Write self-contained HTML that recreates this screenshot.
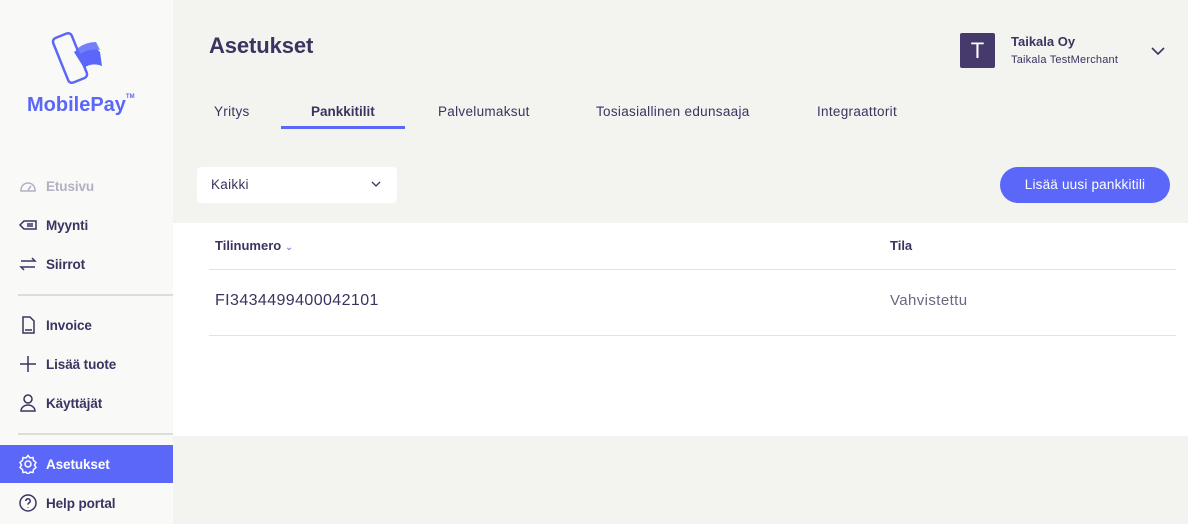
<!DOCTYPE html>
<html><head><meta charset="utf-8"><style>
*{box-sizing:border-box;margin:0;padding:0}
body{width:1188px;height:524px;overflow:hidden;background:#f3f3ef;font-family:"Liberation Sans",sans-serif;color:#3b3360;position:relative}
.side{position:absolute;left:0;top:0;width:173px;height:524px;background:#f9f9f8}
.nav{position:absolute;left:0;width:173px;height:38px;display:flex;align-items:center;padding-left:18px;font-size:13.5px;font-weight:bold;letter-spacing:-0.1px}
.nav svg{width:20px;height:20px;margin-right:8px;fill:none;stroke:#3b3360;stroke-width:1.5}
.hr{position:absolute;left:18px;width:155px;height:2px;background:#dcdcd8}
.abs{position:absolute}
.tab{position:absolute;top:104px;font-size:13.5px;letter-spacing:0.3px}
</style></head><body>
<div class="side">
  <svg class="abs" style="left:50px;top:28px" width="60" height="62" viewBox="0 0 60 62">
    <rect x="10" y="6" width="20" height="48" rx="4" transform="rotate(-22 20 30)" fill="none" stroke="#5a67f8" stroke-width="2.5"/>
    <path d="M24 24 Q32 18 44 18 L50 24 L52 38 Q42 34 34 40 Z" fill="#5a67f8"/>
    <path d="M28 20 Q36 14 46 14 L50 22 Q40 20 30 26 Z" fill="#7480fa"/>
  </svg>
  <div class="abs" style="left:27px;top:94px;font-size:20px;font-weight:bold;color:#5a67f8;letter-spacing:0px">MobilePay<span style="font-size:6px;vertical-align:top">TM</span></div>
  <div class="nav" style="top:167px;color:#b3b0c2"><svg viewBox="0 0 20 20" style="stroke:#b3b0c2"><path d="M3 14a7 7 0 1 1 14 0v1H3z M10 14l3-4"/></svg>Etusivu</div>
  <div class="nav" style="top:206px"><svg viewBox="0 0 20 20"><path d="M6 6h12v8H6L2 10z M9 9h6 M9 11h6"/></svg>Myynti</div>
  <div class="nav" style="top:245px"><svg viewBox="0 0 20 20"><path d="M3 7h14l-3-3 M17 13H3l3 3"/></svg>Siirrot</div>
  <div class="hr" style="top:294px"></div>
  <div class="nav" style="top:306px"><svg viewBox="0 0 20 20"><path d="M5 2h7l4 4v12H5z M7 15h7" /></svg>Invoice</div>
  <div class="nav" style="top:345px"><svg viewBox="0 0 20 20"><path d="M10 2v16 M2 10h16"/></svg>Lisää tuote</div>
  <div class="nav" style="top:384px"><svg viewBox="0 0 20 20"><circle cx="10" cy="6" r="4"/><path d="M3 18a7 6 0 0 1 14 0z"/></svg>Käyttäjät</div>
  <div class="hr" style="top:433px"></div>
  <div class="nav" style="top:445px;background:#5a67f8;color:#fff"><svg viewBox="0 0 20 20" style="stroke:#fff"><circle cx="10" cy="10" r="3"/><path d="M10 1.5l2 2.5 3-.5.5 3 2.5 2-1.5 2.5 1.5 2.5-2.5 2-.5 3-3-.5-2 2.5-2-2.5-3 .5-.5-3-2.5-2 1.5-2.5-1.5-2.5 2.5-2 .5-3 3 .5z"/></svg>Asetukset</div>
  <div class="nav" style="top:484px"><svg viewBox="0 0 20 20"><circle cx="10" cy="10" r="8"/><path d="M7.8 8a2.2 2.2 0 1 1 3 2c-.7.4-.8.8-.8 1.6 M10 14v.5"/></svg>Help portal</div>
</div>
<div class="abs" style="left:209px;top:33px;font-size:22px;font-weight:bold;letter-spacing:-0.1px">Asetukset</div>
<div class="abs" style="left:960px;top:33px;width:35px;height:35px;background:#463a6c;border-radius:2px;color:#fff;font-size:22px;text-align:center;line-height:35px">T</div>
<div class="abs" style="left:1011px;top:34px;font-size:13px;font-weight:bold">Taikala Oy</div>
<div class="abs" style="left:1011px;top:54px;font-size:11px;letter-spacing:0.2px">Taikala TestMerchant</div>
<svg class="abs" style="left:1150px;top:45px" width="16" height="12" viewBox="0 0 16 12"><path d="M2 3l6 6 6-6" fill="none" stroke="#3b3360" stroke-width="1.6"/></svg>
<div class="tab" style="left:214px">Yritys</div>
<div class="tab" style="left:311px;font-weight:bold;letter-spacing:0">Pankkitilit</div>
<div class="abs" style="left:281px;top:126px;width:124px;height:3px;background:#5a67f8"></div>
<div class="tab" style="left:438px">Palvelumaksut</div>
<div class="tab" style="left:596px">Tosiasiallinen edunsaaja</div>
<div class="tab" style="left:817px">Integraattorit</div>
<div class="abs" style="left:197px;top:167px;width:200px;height:36px;background:#fff;border-radius:4px;font-size:13.5px;padding:10px 14px;letter-spacing:0.3px">Kaikki
  <svg class="abs" style="left:174px;top:14px" width="10" height="7" viewBox="0 0 10 7"><path d="M1 1l4 4 4-4" fill="none" stroke="#3b3360" stroke-width="1.3"/></svg></div>
<div class="abs" style="left:1000px;top:167px;width:170px;height:36px;background:#5a67f8;border-radius:18px;color:#fff;font-size:13.5px;text-align:center;line-height:36px;letter-spacing:0.2px">Lisää uusi pankkitili</div>
<div class="abs" style="left:173px;top:223px;width:1015px;height:213px;background:#fff">
  <div class="abs" style="left:42px;top:15px;font-size:13px;font-weight:bold">Tilinumero <span style="color:#5a67f8;font-weight:normal;font-size:10px">&#8964;</span></div>
  <div class="abs" style="left:717px;top:15px;font-size:13px;font-weight:bold">Tila</div>
  <div class="abs" style="left:36px;top:46px;width:967px;height:1px;background:#e3e3e3"></div>
  <div class="abs" style="left:42px;top:69px;font-size:16px;letter-spacing:0.4px">FI3434499400042101</div>
  <div class="abs" style="left:717px;top:69px;font-size:15px;color:#6b6780;letter-spacing:0.4px">Vahvistettu</div>
  <div class="abs" style="left:36px;top:112px;width:967px;height:1px;background:#e3e3e3"></div>
</div>
</body></html>
